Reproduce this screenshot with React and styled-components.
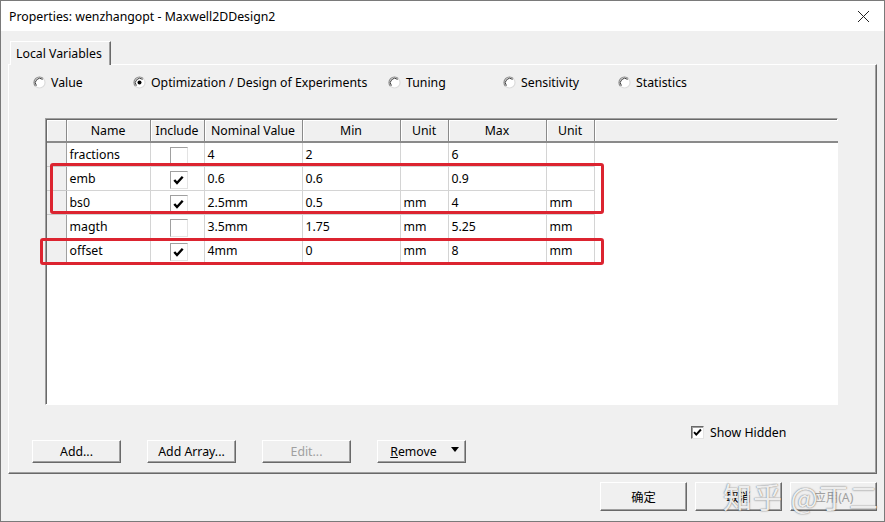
import React from 'react';
import styled, { createGlobalStyle } from 'styled-components';

const GlobalStyle = createGlobalStyle`
  html, body { margin: 0; padding: 0; background: #f0f0f0; }
  body { font-family: "Noto Sans", "Noto Sans CJK SC", sans-serif; font-size: 12px; color: #000; }
`;

const Window = styled.div`
  position: relative;
  width: 885px;
  height: 522px;
  box-sizing: border-box;
  border: 1px solid #7a7a7a;
  background: #f0f0f0;
  display: flex;
  flex-direction: column;
  overflow: hidden;
`;

const TitleBar = styled.div`
  height: 30px;
  background: #fff;
  display: flex;
  align-items: center;
  justify-content: space-between;
  padding: 0 14px 0 8px;
  font-size: 12.3px;
`;

const Body = styled.div`
  flex: 1;
  padding: 10px 0 0 7px;
  display: flex;
  flex-direction: column;
`;

const TabStrip = styled.div`
  display: flex;
  padding-left: 2px;
  position: relative;
  z-index: 1;
`;

const Tab = styled.div`
  width: 101px;
  height: 24px;
  box-sizing: border-box;
  margin-bottom: -1px;
  padding: 3px 0 0 5px;
  background: #f0f0f0;
  border-top: 1px solid #fff;
  border-left: 1px solid #fff;
  border-right: 1px solid #696969;
  box-shadow: inset -1px 0 #a0a0a0;
  font-size: 12.3px;
`;

const Panel = styled.div`
  width: 869px;
  height: 410px;
  box-sizing: border-box;
  border: 1px solid;
  border-color: #fff #696969 #696969 #fff;
  box-shadow: inset -1px -1px #a0a0a0;
  display: flex;
  flex-direction: column;
`;

const RadioRow = styled.div`
  height: 35px;
  display: flex;
  align-items: center;
  padding-left: 24px;
`;

const RadioItem = styled.label`
  width: ${p => p.$w}px;
  display: flex;
  align-items: center;
  gap: 5px;
  font-size: 12.3px;
  flex-shrink: 0;
`;

const TableFrame = styled.div`
  position: relative;
  margin: 18px 0 0 36px;
  width: 793px;
  height: 287px;
  box-sizing: border-box;
  background: #fff;
  border: 1px solid;
  border-color: #a0a0a0 #fff #fff #a0a0a0;
  box-shadow: inset 1px 1px #696969;
  padding: 1px 0 0 1px;
`;

const Grid = styled.table`
  border-collapse: collapse;
  table-layout: fixed;
  width: 791px;
  font-size: 12.3px;
`;

const Th = styled.th`
  height: 20px;
  padding: 0 0 1px;
  font-weight: normal;
  text-align: center;
  background: #f0f0f0;
  border-right: 1px solid #8a8a8a;
  border-bottom: 2px solid #8a8a8a;
  box-shadow: inset 1px 1px #fff;
  &:last-child { border-right: none; }
`;

const RowHead = styled.td`
  height: 23px;
  padding: 0;
  background: #f0f0f0;
  border-right: 1px solid #a0a0a0;
  border-bottom: 1px solid #c8c8c8;
`;

const Td = styled.td`
  height: 23px;
  padding: 0 0 0 3px;
  white-space: nowrap;
  overflow: hidden;
  text-align: ${p => (p.$center ? 'center' : 'left')};
  border-right: 1px solid #d4d4d4;
  border-bottom: 1px solid #d4d4d4;
`;

const Filler = styled.td`
  padding: 0;
`;

const CellBox = styled.span`
  display: inline-flex;
  align-items: center;
  justify-content: center;
  width: 18px;
  height: 18px;
  margin-top: 3px;
  box-sizing: border-box;
  background: #fff;
  border: 1px solid;
  border-color: #a0a0a0 #e3e3e3 #e3e3e3 #a0a0a0;
  vertical-align: top;
`;

const Highlight = styled.div`
  position: absolute;
  left: ${p => p.$x}px;
  top: ${p => p.$y}px;
  width: ${p => p.$w}px;
  height: ${p => p.$h}px;
  box-sizing: border-box;
  border: 3px solid #dc2430;
  border-radius: 3px;
  pointer-events: none;
`;

const ShowHiddenRow = styled.div`
  margin-top: 21px;
  height: 13px;
  padding-left: 682px;
  display: flex;
  align-items: center;
  gap: 6px;
  font-size: 12.3px;
`;

const SmallBox = styled.span`
  width: 13px;
  height: 13px;
  box-sizing: border-box;
  background: #fff;
  border: 1px solid;
  border-color: #696969 #e3e3e3 #e3e3e3 #696969;
  box-shadow: inset 1px 1px #a0a0a0;
  display: inline-flex;
  align-items: center;
  justify-content: center;
`;

const ButtonRow = styled.div`
  display: flex;
  gap: 26px;
  padding-left: 23px;
  margin-top: 1px;
`;

const Button = styled.button`
  width: ${p => p.$w || 89}px;
  height: ${p => p.$h || 23}px;
  box-sizing: border-box;
  padding: 0 ${p => p.$pr || 0}px 0 0;
  font-family: inherit;
  font-size: ${p => p.$fs || 12.3}px;
  color: ${p => (p.disabled ? '#a0a0a0' : '#000')};
  background: #f0f0f0;
  border: 1px solid;
  border-color: #fff #696969 #696969 #fff;
  box-shadow: inset -1px -1px #a0a0a0;
  display: flex;
  align-items: center;
  justify-content: center;
  position: relative;
`;

const Arrow = styled.span`
  position: absolute;
  right: 6px;
  top: 6px;
  width: 0;
  height: 0;
  border-left: 4.5px solid transparent;
  border-right: 4.5px solid transparent;
  border-top: 5px solid #000;
`;

const Footer = styled.div`
  display: flex;
  justify-content: flex-end;
  gap: 8px;
  padding: 8px 7px 0 0;
`;

const Watermark = styled.div`
  position: absolute;
  left: 722px;
  top: 474px;
  font-family: "Noto Sans CJK SC", "Noto Sans", sans-serif;
  font-size: 29px;
  letter-spacing: 1px;
  color: rgba(255, 255, 255, 0.88);
  text-shadow: 0 0 1px rgba(70, 70, 70, 0.7), 0 0 2px rgba(70, 70, 70, 0.4);
  pointer-events: none;
  white-space: nowrap;
`;

const Radio = ({ on }) => (
  <svg width="13" height="13" viewBox="0 0 13 13">
    <circle cx="6.5" cy="6.5" r="5.5" fill="#fff" />
    <path d="M2.6 10.4 A5.5 5.5 0 0 1 10.4 2.6" stroke="#8a8a8a" strokeWidth="1.2" fill="none" />
    <path d="M3.4 9.6 A4.4 4.4 0 0 1 9.6 3.4" stroke="#3c3c3c" strokeWidth="1" fill="none" />
    <path d="M10.4 2.6 A5.5 5.5 0 0 1 2.6 10.4" stroke="#dcdcdc" strokeWidth="1.2" fill="none" />
    {on && <circle cx="6.5" cy="6.5" r="2" fill="#000" />}
  </svg>
);

const Check = ({ size = 11 }) => (
  <svg width={size} height={size} viewBox="0 0 11 11">
    <path d="M1.3 5 L4 8 L9.7 1.8" stroke="#000" strokeWidth="2.4" fill="none" />
  </svg>
);

const cols = [19, 84, 54, 98, 98, 48, 98, 48];

const rows = [
  { name: 'fractions', inc: false, nom: '4', min: '2', u1: '', max: '6', u2: '' },
  { name: 'emb', inc: true, nom: '0.6', min: '0.6', u1: '', max: '0.9', u2: '' },
  { name: 'bs0', inc: true, nom: '2.5mm', min: '0.5', u1: 'mm', max: '4', u2: 'mm' },
  { name: 'magth', inc: false, nom: '3.5mm', min: '1.75', u1: 'mm', max: '5.25', u2: 'mm' },
  { name: 'offset', inc: true, nom: '4mm', min: '0', u1: 'mm', max: '8', u2: 'mm' },
];

const radios = [
  { label: 'Value', w: 100 },
  { label: 'Optimization / Design of Experiments', w: 255, on: true },
  { label: 'Tuning', w: 115 },
  { label: 'Sensitivity', w: 115 },
  { label: 'Statistics', w: 120 },
];

export default function App() {
  return (
    <>
      <GlobalStyle />
      <Window>
        <TitleBar>
          <span>Properties: wenzhangopt - Maxwell2DDesign2</span>
          <svg width="13" height="13" viewBox="0 0 13 13">
            <path d="M1 1 L12 12 M12 1 L1 12" stroke="#222" strokeWidth="1" />
          </svg>
        </TitleBar>
        <Body>
          <TabStrip>
            <Tab>Local Variables</Tab>
          </TabStrip>
          <Panel>
            <RadioRow>
              {radios.map(r => (
                <RadioItem key={r.label} $w={r.w}>
                  <Radio on={r.on} />
                  {r.label}
                </RadioItem>
              ))}
            </RadioRow>
            <TableFrame>
              <Grid>
                <colgroup>
                  {cols.map((w, i) => <col key={i} style={{ width: w }} />)}
                  <col />
                </colgroup>
                <thead>
                  <tr>
                    <Th />
                    <Th>Name</Th>
                    <Th>Include</Th>
                    <Th>Nominal Value</Th>
                    <Th>Min</Th>
                    <Th>Unit</Th>
                    <Th>Max</Th>
                    <Th>Unit</Th>
                    <Th />
                  </tr>
                </thead>
                <tbody>
                  {rows.map(r => (
                    <tr key={r.name}>
                      <RowHead />
                      <Td>{r.name}</Td>
                      <Td $center>
                        <CellBox>{r.inc && <Check />}</CellBox>
                      </Td>
                      <Td>{r.nom}</Td>
                      <Td>{r.min}</Td>
                      <Td>{r.u1}</Td>
                      <Td>{r.max}</Td>
                      <Td>{r.u2}</Td>
                      <Filler />
                    </tr>
                  ))}
                </tbody>
              </Grid>
              <Highlight $x={4} $y={44} $w={554} $h={51} />
              <Highlight $x={-6} $y={119} $w={564} $h={27} />
            </TableFrame>
            <ShowHiddenRow>
              <SmallBox><Check size={9} /></SmallBox>
              Show Hidden
            </ShowHiddenRow>
            <ButtonRow>
              <Button>Add...</Button>
              <Button>Add Array...</Button>
              <Button disabled>Edit...</Button>
              <Button $pr={16}>
                <span><u>R</u>emove</span>
                <Arrow />
              </Button>
            </ButtonRow>
          </Panel>
          <Footer>
            <Button $w={87} $h={29}>确定</Button>
            <Button $w={87} $h={29}>取消</Button>
            <Button $w={87} $h={29} disabled>应用(A)</Button>
          </Footer>
        </Body>
        <Watermark>知乎 @丁二</Watermark>
      </Window>
    </>
  );
}
